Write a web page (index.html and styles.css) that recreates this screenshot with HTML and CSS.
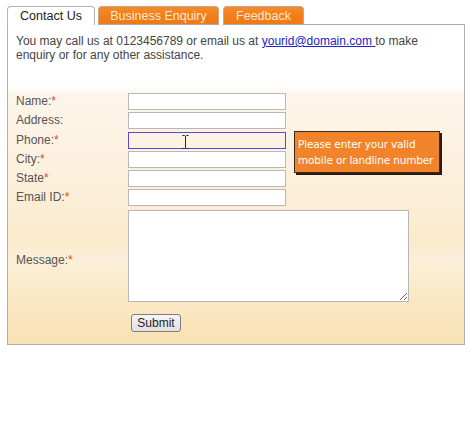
FILE: index.html
```html
<!DOCTYPE html>
<html>
<head>
<meta charset="utf-8">
<link rel="stylesheet" href="styles.css">
</head>
<body>
<div class="wrap">
  <div class="tabs">
    <div class="tab active">Contact Us</div>
    <div class="tab orange biz">Business Enquiry</div>
    <div class="tab orange fb">Feedback</div>
    <div class="tab-fill"></div>
  </div>
  <div class="panel">
    <p class="intro">You may call us at 0123456789 or email us at <a href="#" class="mail">yourid@domain.com </a> to make enquiry or for any other assistance.</p>
    <form class="form">
      <label class="lbl">Name:<span class="req">*</span></label>
      <input class="field" type="text">
      <label class="lbl">Address:</label>
      <input class="field" type="text">
      <label class="lbl">Phone:<span class="req">*</span></label>
      <div class="phone-cell">
        <div class="field focus">
          <svg class="ibeam" width="7" height="14" viewBox="0 0 7 14"><path d="M0.5 0.5h2l1 1 1-1h2M3.5 1.5v11M0.5 13.5h2l1-1 1 1h2" fill="none" stroke="#222" stroke-width="1"/></svg>
        </div>
        <div class="tip">Please enter your valid<br>mobile or landline number</div>
      </div>
      <label class="lbl">City:<span class="req">*</span></label>
      <input class="field" type="text">
      <label class="lbl">State<span class="req">*</span></label>
      <input class="field" type="text">
      <label class="lbl">Email ID:<span class="req">*</span></label>
      <input class="field" type="text">
      <label class="lbl msg">Message:<span class="req">*</span></label>
      <textarea class="area"></textarea>
      <span></span>
      <div class="btn-cell"><button type="button" class="btn">Submit</button></div>
    </form>
  </div>
</div>
</body>
</html>
```
FILE: styles.css
```css
html, body {
  margin: 0;
  padding: 0;
  background: #ffffff;
}
body {
  font-family: "Liberation Sans", Arial, sans-serif;
  font-size: 12px;
  color: #444;
}
.wrap {
  width: 458px;
  padding: 6px 0 0 7px;
}
.tabs {
  display: flex;
  align-items: flex-end;
  height: 19px;
}
.tab {
  box-sizing: border-box;
  height: 19px;
  border: 1px solid #b3b3b3;
  border-bottom: none;
  border-radius: 4px 4px 0 0;
  text-align: center;
  line-height: 19px;
  font-size: 12.5px;
}
.tab.active {
  width: 88px;
  background: #fff;
  color: #222;
}
.tab.orange {
  background: linear-gradient(#f58a2a, #f07d1a 60%, #ee7a18);
  color: #fde7d0;
  border-color: #c9a68a;
  border-bottom: 1px solid #aaa;
}
.tab.biz {
  width: 121px;
  margin-left: 3px;
}
.tab.fb {
  width: 81px;
  margin-left: 4px;
}
.tab-fill {
  flex: 1;
  height: 19px;
  box-sizing: border-box;
  border-bottom: 1px solid #aaa;
}
.panel {
  border: 1px solid #b0b0b0;
  border-top: none;
  background: linear-gradient(#ffffff 0, #ffffff 60px, #fdf5ea 70px, #fcf0dd 150px, #fbebcc 215px, #fcefd9 235px, #fae7c2 280px, #f8e1b3 318px);
}
.intro {
  margin: 0;
  padding: 9px 10px 0 8px;
  line-height: 14px;
  color: #444;
}
.mail {
  color: #2222cc;
  text-decoration: underline;
}
.form {
  display: grid;
  grid-template-columns: 112px auto;
  row-gap: 2.3px;
  padding: 31px 0 12px 8px;
  align-items: center;
}
.lbl {
  color: #555;
  line-height: 17px;
}
.req {
  color: #d2501e;
}
.field {
  box-sizing: border-box;
  width: 158px;
  height: 17px;
  border: 1px solid #b8b8b8;
  background: #fff;
  margin: 0;
  padding: 0;
  font: 12px "Liberation Sans", Arial, sans-serif;
}
.phone-cell {
  position: relative;
  height: 17px;
}
.field.focus {
  position: relative;
  border: 1px solid #5a48d6;
  background: transparent;
}
.ibeam {
  position: absolute;
  left: 53px;
  top: 2px;
}
.tip {
  position: absolute;
  left: 166px;
  top: -1px;
  width: 146px;
  box-sizing: border-box;
  padding: 4px 3px 4px 3px;
  background: #f1832a;
  border: 1px solid #3a2a20;
  box-shadow: 2px 2px 0 #2a1a10;
  color: #fff;
  font-family: "DejaVu Sans", Verdana, sans-serif;
  font-size: 10.5px;
  letter-spacing: -0.15px;
  white-space: nowrap;
  line-height: 16px;
  z-index: 2;
}
.lbl.msg {
  align-self: center;
}
.area {
  box-sizing: border-box;
  width: 281px;
  height: 92px;
  margin: 1.7px 0 9px 0;
  border: 1px solid #b8b8b8;
  background: #fff;
  padding: 2px;
  display: block;
}
.btn-cell {
  display: flex;
}
.btn {
  box-sizing: border-box;
  width: 50px;
  height: 18px;
  margin-left: 3px;
  padding: 0;
  border: 1px solid #7d7d7d;
  border-radius: 3px;
  background: linear-gradient(#f7f5f7, #e3dfe3);
  color: #222;
  font: 12px "Liberation Sans", Arial, sans-serif;
  line-height: 16px;
}
```
